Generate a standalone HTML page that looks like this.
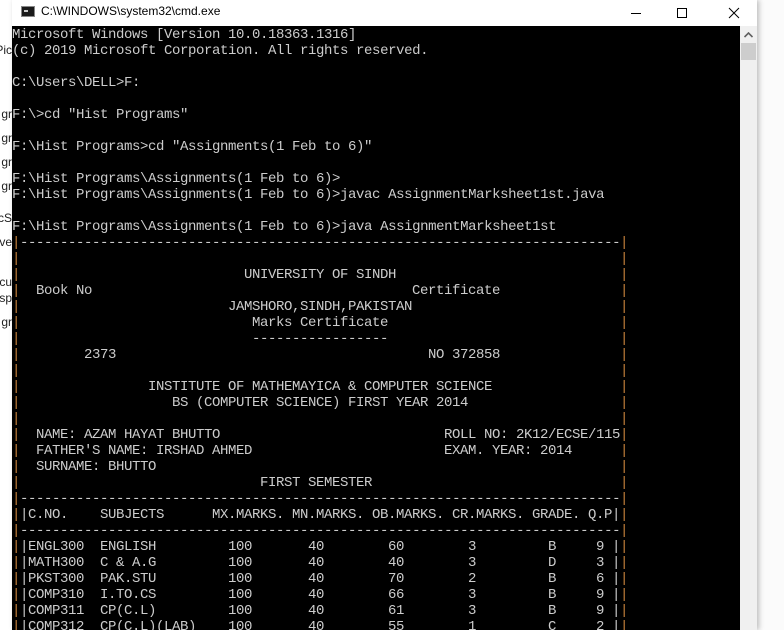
<!DOCTYPE html>
<html><head><meta charset="utf-8"><style>
html,body{margin:0;padding:0;width:784px;height:630px;overflow:hidden;background:#fbfbfb;position:relative}
.desk{position:absolute;left:0;top:0;width:12px;height:630px;background:#fff;overflow:hidden;font:12px "Liberation Sans",sans-serif;color:#222}
.desk span{position:absolute;right:0;white-space:nowrap}
.win{position:absolute;left:12px;top:0;width:745px;height:630px;background:#000;box-shadow:2px 0 5px rgba(0,0,0,.25)}
.title{position:absolute;left:0;top:0;width:745px;height:26px;background:#fff}
.title .tx{position:absolute;left:29px;top:4px;font:12px "Liberation Sans",sans-serif;color:#000}
.ico{position:absolute;left:9px;top:6px;width:14px;height:11px;background:#1a1a1a;border:1px solid #888;box-sizing:border-box}
.ico:after{content:"";position:absolute;left:2px;top:3px;width:4px;height:2px;background:#ccc}
.sb{position:absolute;left:728px;top:26px;width:17px;height:604px;background:#f0f0f0}
.sb .th{position:absolute;left:1px;top:17px;width:15px;height:17px;background:#cdcdcd}
.t{position:absolute;white-space:pre;font-family:"Liberation Mono",monospace;font-size:14px;letter-spacing:-0.4px;line-height:16px;color:#cccccc;margin-top:1px}
.o{color:#c8823c}
</style></head><body>
<div class="desk">
<span style="top:43px">Pic</span><span style="top:107px">gr</span><span style="top:131px">gr</span><span style="top:155px">gr</span><span style="top:179px">gr</span><span style="top:211px">cS</span><span style="top:235px">ave</span><span style="top:275px">cu</span><span style="top:291px">sp</span><span style="top:315px">gr</span>
</div>
<div class="win">
<div class="title"><div class="ico"></div><div class="tx">C:\WINDOWS\system32\cmd.exe</div>
<svg style="position:absolute;left:619px;top:4px" width="120" height="18" viewBox="0 0 120 18">
<line x1="0" y1="9.5" x2="10" y2="9.5" stroke="#000" stroke-width="1"/>
<rect x="46.5" y="4.5" width="9" height="9" fill="none" stroke="#000" stroke-width="1"/>
<path d="M98 4 L108 14 M108 4 L98 14" stroke="#000" stroke-width="1"/>
</svg></div>
<div class="sb"><svg style="position:absolute;left:4px;top:6px" width="9" height="6"><path d="M0.5 5 L4.5 1 L8.5 5" fill="none" stroke="#606060" stroke-width="1.6"/></svg><div class="th"></div></div>
</div>
<div class="t" style="left:12px;top:26px">Microsoft Windows [Version 10.0.18363.1316]</div>
<div class="t" style="left:12px;top:42px">(c) 2019 Microsoft Corporation. All rights reserved.</div>
<div class="t" style="left:12px;top:74px">C:\Users\DELL&gt;F:</div>
<div class="t" style="left:12px;top:106px">F:\&gt;cd "Hist Programs"</div>
<div class="t" style="left:12px;top:138px">F:\Hist Programs&gt;cd "Assignments(1 Feb to 6)"</div>
<div class="t" style="left:12px;top:170px">F:\Hist Programs\Assignments(1 Feb to 6)&gt;</div>
<div class="t" style="left:12px;top:186px">F:\Hist Programs\Assignments(1 Feb to 6)&gt;javac AssignmentMarksheet1st.java</div>
<div class="t" style="left:12px;top:218px">F:\Hist Programs\Assignments(1 Feb to 6)&gt;java AssignmentMarksheet1st</div>
<div class="t o" style="left:12px;top:234px">|
|
|
|
|
|
|
|
|
|
|
|
|
|
|
|
|
|
|
|
|
|
|
|
|</div>
<div class="t o" style="left:620px;top:234px">|
|
|
|
|
|
|
|
|
|
|
|
|
|
|
|
|
|
|
|
|
|
|
|
|</div>
<div class="t" style="left:20px;top:234px">---------------------------------------------------------------------------</div>
<div class="t" style="left:244px;top:266px">UNIVERSITY OF SINDH</div>
<div class="t" style="left:36px;top:282px">Book No</div>
<div class="t" style="left:412px;top:282px">Certificate</div>
<div class="t" style="left:228px;top:298px">JAMSHORO,SINDH,PAKISTAN</div>
<div class="t" style="left:252px;top:314px">Marks Certificate</div>
<div class="t" style="left:252px;top:330px">-----------------</div>
<div class="t" style="left:84px;top:346px">2373</div>
<div class="t" style="left:428px;top:346px">NO 372858</div>
<div class="t" style="left:148px;top:378px">INSTITUTE OF MATHEMAYICA &amp; COMPUTER SCIENCE</div>
<div class="t" style="left:172px;top:394px">BS (COMPUTER SCIENCE) FIRST YEAR 2014</div>
<div class="t" style="left:36px;top:426px">NAME: AZAM HAYAT BHUTTO</div>
<div class="t" style="left:444px;top:426px">ROLL NO: 2K12/ECSE/115</div>
<div class="t" style="left:36px;top:442px">FATHER'S NAME: IRSHAD AHMED</div>
<div class="t" style="left:444px;top:442px">EXAM. YEAR: 2014</div>
<div class="t" style="left:36px;top:458px">SURNAME: BHUTTO</div>
<div class="t" style="left:260px;top:474px">FIRST SEMESTER</div>
<div class="t" style="left:20px;top:490px">---------------------------------------------------------------------------</div>
<div class="t" style="left:20px;top:506px">|</div>
<div class="t" style="left:28px;top:506px">C.NO.</div>
<div class="t" style="left:100px;top:506px">SUBJECTS</div>
<div class="t" style="left:212px;top:506px">MX.MARKS.</div>
<div class="t" style="left:292px;top:506px">MN.MARKS.</div>
<div class="t" style="left:372px;top:506px">OB.MARKS.</div>
<div class="t" style="left:452px;top:506px">CR.MARKS.</div>
<div class="t" style="left:532px;top:506px">GRADE.</div>
<div class="t" style="left:588px;top:506px">Q.P</div>
<div class="t" style="left:612px;top:506px">|</div>
<div class="t" style="left:20px;top:522px">---------------------------------------------------------------------------</div>

<div class="t" style="left:20px;top:538px">|</div><div class="t" style="left:28px;top:538px">ENGL300</div><div class="t" style="left:100px;top:538px">ENGLISH</div><div class="t" style="left:228px;top:538px">100</div><div class="t" style="left:308px;top:538px">40</div><div class="t" style="left:388px;top:538px">60</div><div class="t" style="left:468px;top:538px">3</div><div class="t" style="left:548px;top:538px">B</div><div class="t" style="left:596px;top:538px">9</div><div class="t" style="left:612px;top:538px">|</div>
<div class="t" style="left:20px;top:554px">|</div><div class="t" style="left:28px;top:554px">MATH300</div><div class="t" style="left:100px;top:554px">C &amp; A.G</div><div class="t" style="left:228px;top:554px">100</div><div class="t" style="left:308px;top:554px">40</div><div class="t" style="left:388px;top:554px">40</div><div class="t" style="left:468px;top:554px">3</div><div class="t" style="left:548px;top:554px">D</div><div class="t" style="left:596px;top:554px">3</div><div class="t" style="left:612px;top:554px">|</div>
<div class="t" style="left:20px;top:570px">|</div><div class="t" style="left:28px;top:570px">PKST300</div><div class="t" style="left:100px;top:570px">PAK.STU</div><div class="t" style="left:228px;top:570px">100</div><div class="t" style="left:308px;top:570px">40</div><div class="t" style="left:388px;top:570px">70</div><div class="t" style="left:468px;top:570px">2</div><div class="t" style="left:548px;top:570px">B</div><div class="t" style="left:596px;top:570px">6</div><div class="t" style="left:612px;top:570px">|</div>
<div class="t" style="left:20px;top:586px">|</div><div class="t" style="left:28px;top:586px">COMP310</div><div class="t" style="left:100px;top:586px">I.TO.CS</div><div class="t" style="left:228px;top:586px">100</div><div class="t" style="left:308px;top:586px">40</div><div class="t" style="left:388px;top:586px">66</div><div class="t" style="left:468px;top:586px">3</div><div class="t" style="left:548px;top:586px">B</div><div class="t" style="left:596px;top:586px">9</div><div class="t" style="left:612px;top:586px">|</div>
<div class="t" style="left:20px;top:602px">|</div><div class="t" style="left:28px;top:602px">COMP311</div><div class="t" style="left:100px;top:602px">CP(C.L)</div><div class="t" style="left:228px;top:602px">100</div><div class="t" style="left:308px;top:602px">40</div><div class="t" style="left:388px;top:602px">61</div><div class="t" style="left:468px;top:602px">3</div><div class="t" style="left:548px;top:602px">B</div><div class="t" style="left:596px;top:602px">9</div><div class="t" style="left:612px;top:602px">|</div>
<div class="t" style="left:20px;top:618px">|</div><div class="t" style="left:28px;top:618px">COMP312</div><div class="t" style="left:100px;top:618px">CP(C.L)(LAB)</div><div class="t" style="left:228px;top:618px">100</div><div class="t" style="left:308px;top:618px">40</div><div class="t" style="left:388px;top:618px">55</div><div class="t" style="left:468px;top:618px">1</div><div class="t" style="left:548px;top:618px">C</div><div class="t" style="left:596px;top:618px">2</div><div class="t" style="left:612px;top:618px">|</div>
</body></html>
